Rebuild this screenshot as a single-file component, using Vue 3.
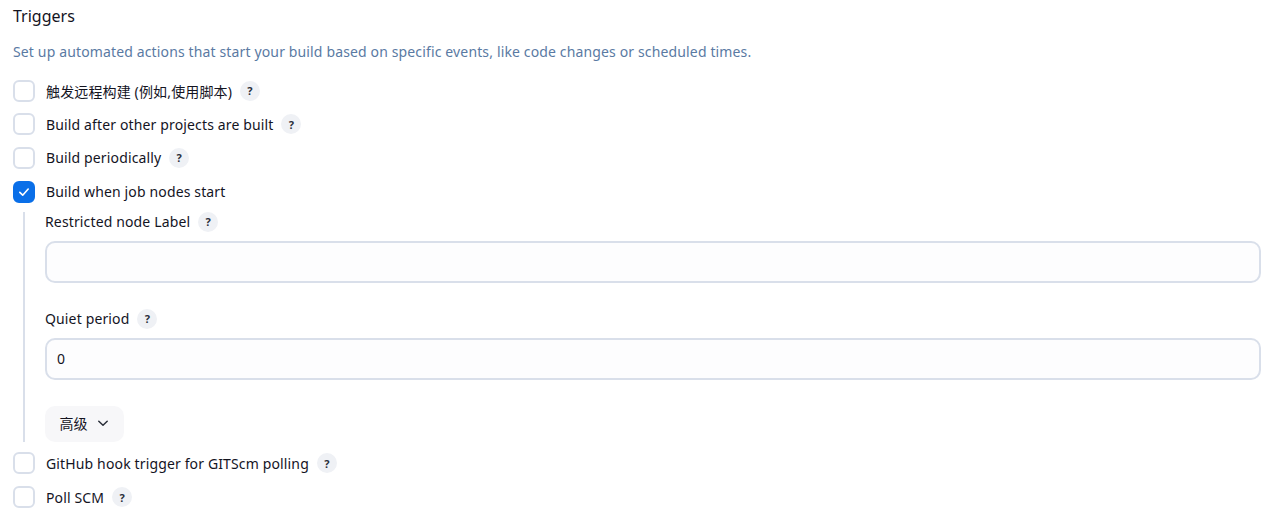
<script setup>
const before = [
  { label: '触发远程构建 (例如,使用脚本)' },
  { label: 'Build after other projects are built' },
  { label: 'Build periodically' },
]
const after = [
  { label: 'GitHub hook trigger for GITScm polling' },
  { label: 'Poll SCM' },
]
</script>

<template>
  <main class="page">
    <h2 class="title">Triggers</h2>
    <p class="desc">Set up automated actions that start your build based on specific events, like code changes or scheduled times.</p>
    <div class="row" v-for="r in before" :key="r.label">
      <span class="box"></span>
      <span class="lbl">{{ r.label }}</span>
      <span class="help">?</span>
    </div>
    <div class="row">
      <span class="box checked">
        <svg width="14" height="14" viewBox="0 0 14 14"><path d="M2.8 7.4 5.7 10.2 11.2 4" fill="none" stroke="#fff" stroke-width="1.6" stroke-linecap="round" stroke-linejoin="round"/></svg>
      </span>
      <span class="lbl">Build when job nodes start</span>
    </div>
    <section class="nested">
      <div class="field-label"><span>Restricted node Label</span><span class="help">?</span></div>
      <input class="input" type="text" value="" />
      <div class="field-label second"><span>Quiet period</span><span class="help">?</span></div>
      <input class="input" type="text" value="0" />
      <button class="adv" type="button">
        <span>高级</span>
        <svg width="12" height="12" viewBox="0 0 12 12"><path d="M1.8 4.2 6 8.2 10.2 4.2" fill="none" stroke="#2a2f3a" stroke-width="1.5" stroke-linecap="round" stroke-linejoin="round"/></svg>
      </button>
    </section>
    <div class="row" v-for="r in after" :key="r.label">
      <span class="box"></span>
      <span class="lbl">{{ r.label }}</span>
      <span class="help">?</span>
    </div>
  </main>
</template>

<style>
html, body { background: #fff; margin: 0; overflow: hidden; }
</style>

<style scoped>
.page {
  box-sizing: border-box;
  height: 523px;
  padding: 6px 17px 0 13px;
  font-family: "Noto Sans", "Noto Sans CJK SC", sans-serif;
  font-size: 14px;
  letter-spacing: .14px;
  color: #14141f;
  overflow: hidden;
}
.title { margin: 0; font-size: 16px; font-weight: 400; line-height: 21px; letter-spacing: 0; }
.desc { margin: 15px 0 11.8px; font-size: 14px; line-height: 20px; color: #5a7aa3; }
.row { display: flex; align-items: center; height: 33.67px; }
.box {
  box-sizing: border-box;
  width: 22px; height: 22px;
  border: 2px solid #d9dfea;
  border-radius: 6px;
  background: #fff;
  display: flex; align-items: center; justify-content: center;
  flex: none;
}
.box.checked { background: #0a6fe8; border-color: #0a6fe8; }
.lbl { margin-left: 11px; }
.help {
  width: 20px; height: 20px; border-radius: 50%;
  background: #eff1f5; color: #2a2f3a;
  font-size: 11px; font-weight: 700;
  display: flex; align-items: center; justify-content: center;
  margin-left: 8px; flex: none;
}
.nested {
  margin: 3.2px 0 5px 10px;
  padding: 0 0 0 20px;
  border-left: 2px solid #d9dfea;
  height: 230px;
  box-sizing: border-box;
}
.field-label { display: flex; align-items: center; height: 20px; }
.second { margin-top: 26px; }
.input {
  display: block;
  box-sizing: border-box;
  width: 100%;
  height: 42px;
  margin-top: 9px;
  border: 2px solid #d9dfea;
  border-radius: 10px;
  background: #fdfdfe;
  padding: 0 10px;
  font: inherit;
  letter-spacing: inherit;
  color: inherit;
  outline: none;
}
.adv {
  margin-top: 26px;
  height: 36px;
  width: 79px;
  border: 0;
  border-radius: 10px;
  background: #f7f7f9;
  font: inherit;
  letter-spacing: 0;
  color: inherit;
  display: flex; align-items: center; justify-content: center; gap: 9px;
  padding: 0 1px 2px 0;
}
</style>
